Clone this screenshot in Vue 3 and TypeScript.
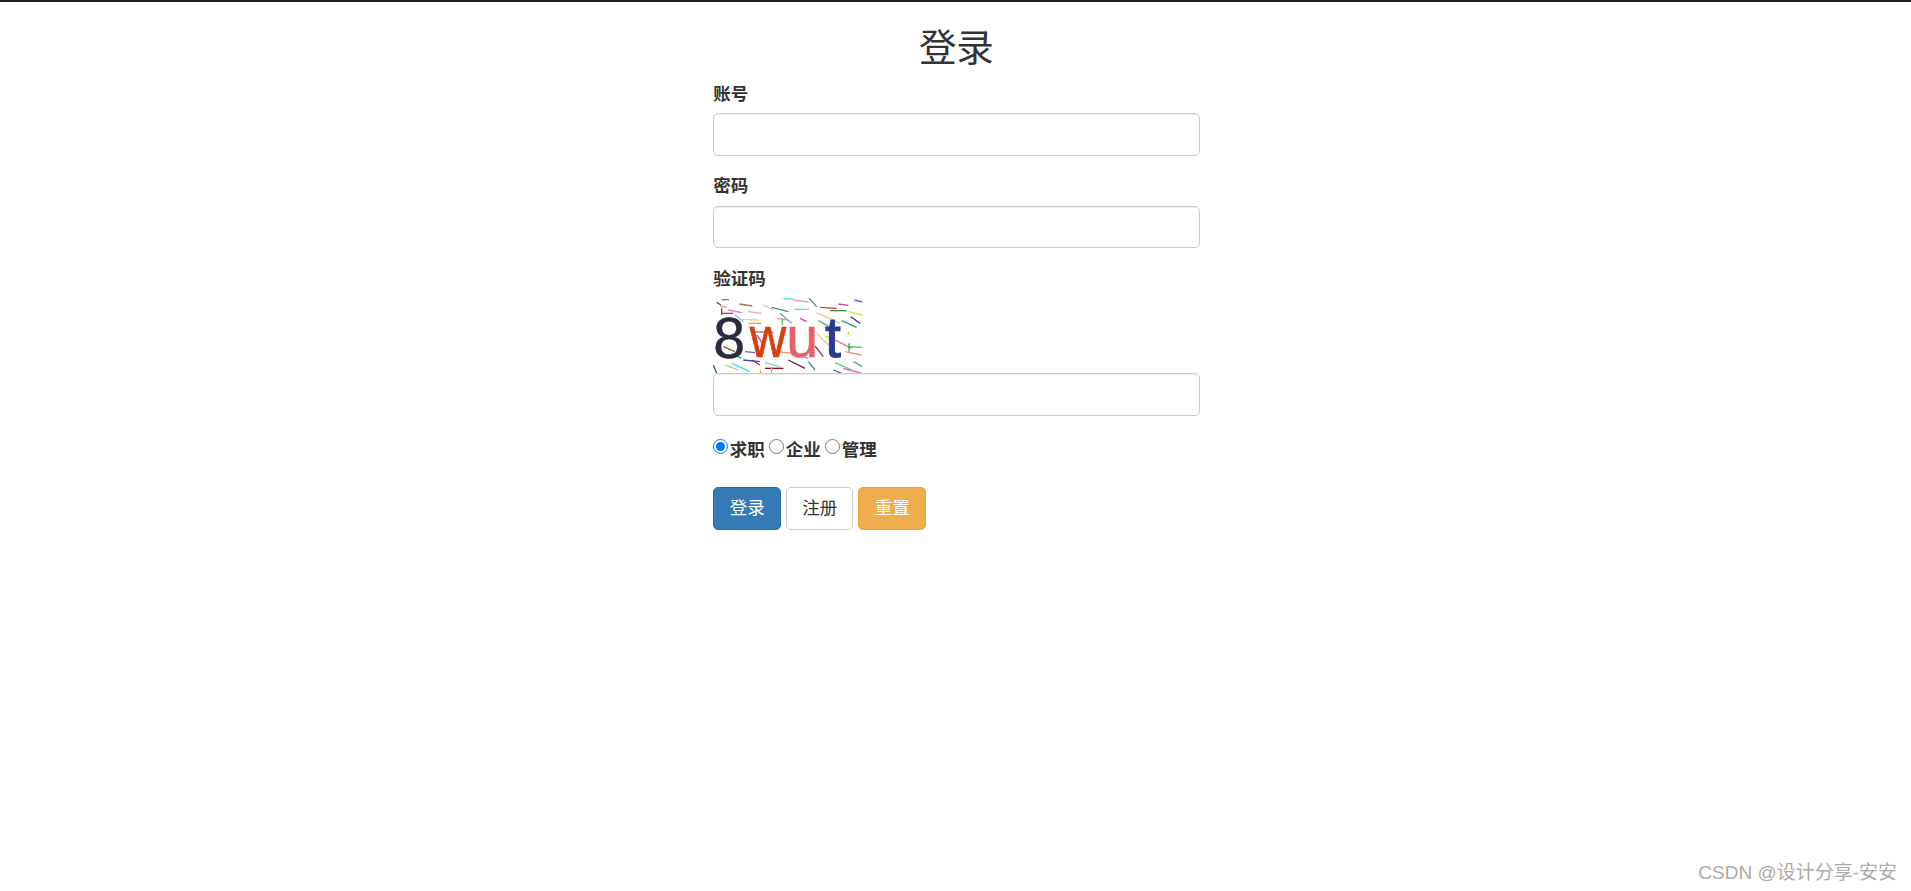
<script setup lang="ts">
interface NoiseLine { x1: number; y1: number; x2: number; y2: number; c: string }
const raw: [number, number, number, number, string][] = [
  [50,29,72,29,'#8a7a70'],[35,37,48,45,'#5a3fd0'],[45,48,65,52,'#f0a040'],[103,42,142,48,'#a07060'],
  [175,45,205,60,'#f0b0c0'],[200,52,250,65,'#5a8a50'],[235,25,265,28,'#40e0b0'],[265,30,310,36,'#f0a0b0'],
  [313,25,335,50,'#4a80a0'],[268,58,312,58,'#60e0d0'],[345,52,395,55,'#e04020'],[375,62,425,62,'#4a8a4a'],
  [400,42,430,46,'#c040c0'],[448,30,472,36,'#8050d0'],[430,65,472,75,'#e0e040'],[50,55,50,75,'#804060'],
  [50,70,85,70,'#c04060'],[70,60,110,68,'#f070d0'],[130,65,170,70,'#f0a0b0'],[110,88,160,90,'#f0d080'],
  [130,100,170,100,'#f0a040'],[90,75,115,95,'#80c0e0'],[225,70,260,100,'#70a0c0'],[215,85,250,90,'#f090a0'],
  [232,85,232,105,'#60c060'],[285,85,305,95,'#c040e0'],[340,92,370,108,'#50b050'],[335,68,405,100,'#f0c090'],
  [410,92,455,112,'#20a080'],[437,80,465,100,'#5040c0'],[430,125,430,135,'#b0e040'],[310,118,330,140,'#b0f040'],
  [335,130,370,165,'#e0d080'],[360,140,375,140,'#c0f040'],[390,150,440,175,'#f06070'],[435,170,472,172,'#30d040'],
  [432,160,432,185,'#40a060'],[145,125,205,128,'#b07090'],[155,135,180,170,'#e04080'],
  [120,185,150,188,'#8060c0'],[115,210,165,215,'#4040c0'],[140,210,165,225,'#803080'],[80,190,110,205,'#00b090'],
  [205,185,270,190,'#e0a060'],[265,190,310,205,'#c080d0'],[330,168,355,200,'#804060'],[420,185,470,195,'#f09080'],
  [60,225,100,240,'#90d060'],[80,220,135,245,'#40e0e0'],[180,218,225,230,'#90d0d0'],[180,235,235,235,'#901030'],
  [200,232,200,250,'#a0d060'],[250,210,300,235,'#602040'],[310,215,330,240,'#4090a0'],[390,218,440,240,'#40e080'],
  [445,215,472,230,'#60a0a0'],[415,235,470,250,'#e060a0'],[25,225,35,250,'#206060'],[385,240,410,250,'#4060c0'],
  [165,240,168,250,'#f0a040']
]
const lines: NoiseLine[] = raw.map(([x1, y1, x2, y2, c]) => ({ x1, y1, x2, y2, c }))
const roles = ['求职', '企业', '管理']
</script>

<template>
  <div class="page">
    <form class="panel" @submit.prevent>
      <h2 class="title">登录</h2>
      <div class="group">
        <label class="field-label">账号</label>
        <input class="control" type="text" />
      </div>
      <div class="group">
        <label class="field-label">密码</label>
        <input class="control" type="password" />
      </div>
      <div class="group">
        <label class="field-label">验证码</label>
        <svg class="captcha" viewBox="24 24 450 225" width="150" height="75" role="img" aria-label="验证码图片">
          <g class="noise">
            <line
              v-for="(l, i) in lines"
              :key="i"
              :x1="l.x1"
              :y1="l.y1"
              :x2="l.x2"
              :y2="l.y2"
              :stroke="l.c"
              stroke-width="4"
            />
          </g>
          <text x="25" y="203" fill="#2b2b40" stroke="#2b2b40" stroke-width="1.5" class="glyph">8</text>
          <text transform="translate(134 202) scale(0.88 1)" fill="#d4400f" stroke="#d4400f" stroke-width="2" class="glyph">w</text>
          <text x="244" y="202" fill="#e8606a" stroke="#e8606a" stroke-width="1.5" class="glyph">u</text>
          <text x="360" y="202" fill="#2b3a90" stroke="#2b3a90" stroke-width="3" class="glyph">t</text>
          <line x1="55" y1="170" x2="90" y2="185" stroke="#806040" stroke-width="4" />
        </svg>
        <input class="control" type="text" />
      </div>
      <div class="radios">
        <label v-for="(r, i) in roles" :key="r" class="radio-item">
          <input type="radio" name="role" class="radio" :checked="i === 0" />{{ r }}
        </label>
      </div>
      <div class="actions">
        <button type="button" class="btn primary">登录</button>
        <button type="button" class="btn plain">注册</button>
        <button type="button" class="btn warning">重置</button>
      </div>
    </form>
    <div class="mark">CSDN @设计分享-安安</div>
  </div>
</template>

<style scoped>
.page {
  box-sizing: border-box;
  position: relative;
  height: 891px;
  overflow: hidden;
  border-top: 2px solid #222;
  background: #fff;
  color: #333;
  font-family: "Liberation Sans", "Noto Sans CJK SC", sans-serif;
  font-size: 17.5px;
  line-height: 25px;
}
.panel {
  width: 486.25px;
  margin-left: 713.25px;
}
.title {
  margin: 26px 0 12.5px;
  font-size: 37.5px;
  font-weight: 400;
  line-height: 41.25px;
  text-align: center;
}
.group {
  margin-bottom: 18.75px;
}
.field-label {
  display: block;
  margin-bottom: 6.25px;
  font-weight: 700;
}
.control {
  display: block;
  box-sizing: border-box;
  width: 100%;
  height: 42.5px;
  padding: 7.5px 15px;
  border: 1px solid #ccc;
  border-radius: 5px;
  background: #fff;
  box-shadow: inset 0 1px 1px rgba(0, 0, 0, 0.075);
  outline: none;
}
.captcha {
  display: block;
}
.noise {
  filter: blur(0.6px);
}
.glyph {
  font-family: "Liberation Sans", sans-serif;
  font-size: 172px;
}
.radios {
  display: flex;
  gap: 4.5px;
  height: 33.5px;
  margin-bottom: 18.75px;
  align-items: center;
}
.radio-item {
  display: flex;
  align-items: center;
  font-weight: 700;
  margin-top: -2px;
}
.radio {
  width: 15px;
  height: 15px;
  margin: -7px 1.5px 0 0;
}
.actions {
  display: flex;
  gap: 5px;
}
.btn {
  box-sizing: border-box;
  width: 68px;
  height: 43px;
  padding: 0;
  border: 1px solid transparent;
  border-radius: 5px;
  font: inherit;
}
.primary {
  background: #337ab7;
  border-color: #2e6da4;
  color: #fff;
}
.plain {
  width: 67px;
  background: #fff;
  border-color: #ccc;
  color: #333;
}
.warning {
  background: #f0ad4e;
  border-color: #eea236;
  color: #fff;
}
.mark {
  position: absolute;
  right: 14px;
  top: 859px;
  color: #aaa;
  font-size: 19px;
  line-height: 24px;
}
</style>
